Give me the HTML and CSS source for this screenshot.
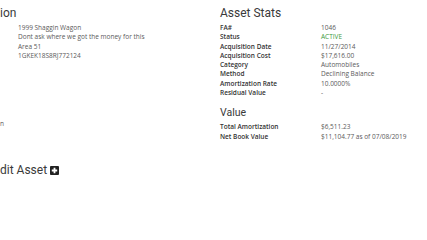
FILE: index.html
```html
<!DOCTYPE html>
<html>
<head>
<meta charset="utf-8">
<link rel="stylesheet" href="styles.css">
</head>
<body>
<div class="page">
  <section class="col-left">
    <h3 class="heading">ion</h3>
    <ul class="left-values">
      <li>1999 Shaggin Wagon</li>
      <li>Dont ask where we got the money for this</li>
      <li>Area 51</li>
      <li>1GKEK18S8RJ772124</li>
    </ul>
    <p class="note">n</p>
    <h3 class="heading edit-heading">dit Asset <span class="plus-icon"><svg viewBox="0 0 10 10" width="9" height="9"><rect x="0" y="0" width="10" height="10" rx="1" fill="#222"/><path d="M5 2v6M2 5h6" stroke="#fff" stroke-width="2"/></svg></span></h3>
  </section>
  <section class="col-right">
    <h3 class="heading">Asset Stats</h3>
    <dl class="rows">
      <dt>FA#</dt><dd>1046</dd>
      <dt>Status</dt><dd class="active">ACTIVE</dd>
      <dt>Acquisition Date</dt><dd>11/27/2014</dd>
      <dt>Acquisition Cost</dt><dd>$17,616.00</dd>
      <dt>Category</dt><dd>Automobiles</dd>
      <dt>Method</dt><dd>Declining Balance</dd>
      <dt>Amortization Rate</dt><dd>10.0000%</dd>
      <dt>Residual Value</dt><dd>-</dd>
    </dl>
    <h4 class="subheading">Value</h4>
    <dl class="rows">
      <dt>Total Amortization</dt><dd>$6,511.23</dd>
      <dt>Net Book Value</dt><dd>$11,104.77 as of 07/08/2019</dd>
    </dl>
  </section>
</div>
</body>
</html>
```

FILE: styles.css
```css
html, body {
  margin: 0;
  padding: 0;
  background: #fff;
}
body {
  font-family: "Open Sans", "Noto Sans", sans-serif;
  font-size: 6.5px;
  line-height: 9.3px;
  color: #5a5a5a;
  overflow: hidden;
}
.page {
  display: grid;
  grid-template-columns: 220px 1fr;
}
.heading {
  font-family: Roboto, "Liberation Sans", sans-serif;
  font-weight: 400;
  font-size: 12px;
  line-height: 14px;
  color: #3a3a3a;
  margin: 6px 0 3px 0;
}
.left-values {
  list-style: none;
  margin: 0;
  padding: 0 0 0 18px;
}
.rows {
  display: grid;
  grid-template-columns: 101px 1fr;
  margin: 0;
}
.rows dt {
  font-weight: 600;
  color: #333;
}
.rows dd {
  margin: 0;
}
.active {
  color: #3c9a3c;
}
.note {
  margin: 59px 0 0 0;
}
.edit-heading {
  margin-top: 35px;
}
.plus-icon svg {
  display: inline-block;
  vertical-align: -1px;
}
.subheading {
  font-family: Roboto, "Liberation Sans", sans-serif;
  font-weight: 400;
  font-size: 10.5px;
  line-height: 12px;
  color: #3a3a3a;
  margin: 10px 0 3px 0;
}
```
